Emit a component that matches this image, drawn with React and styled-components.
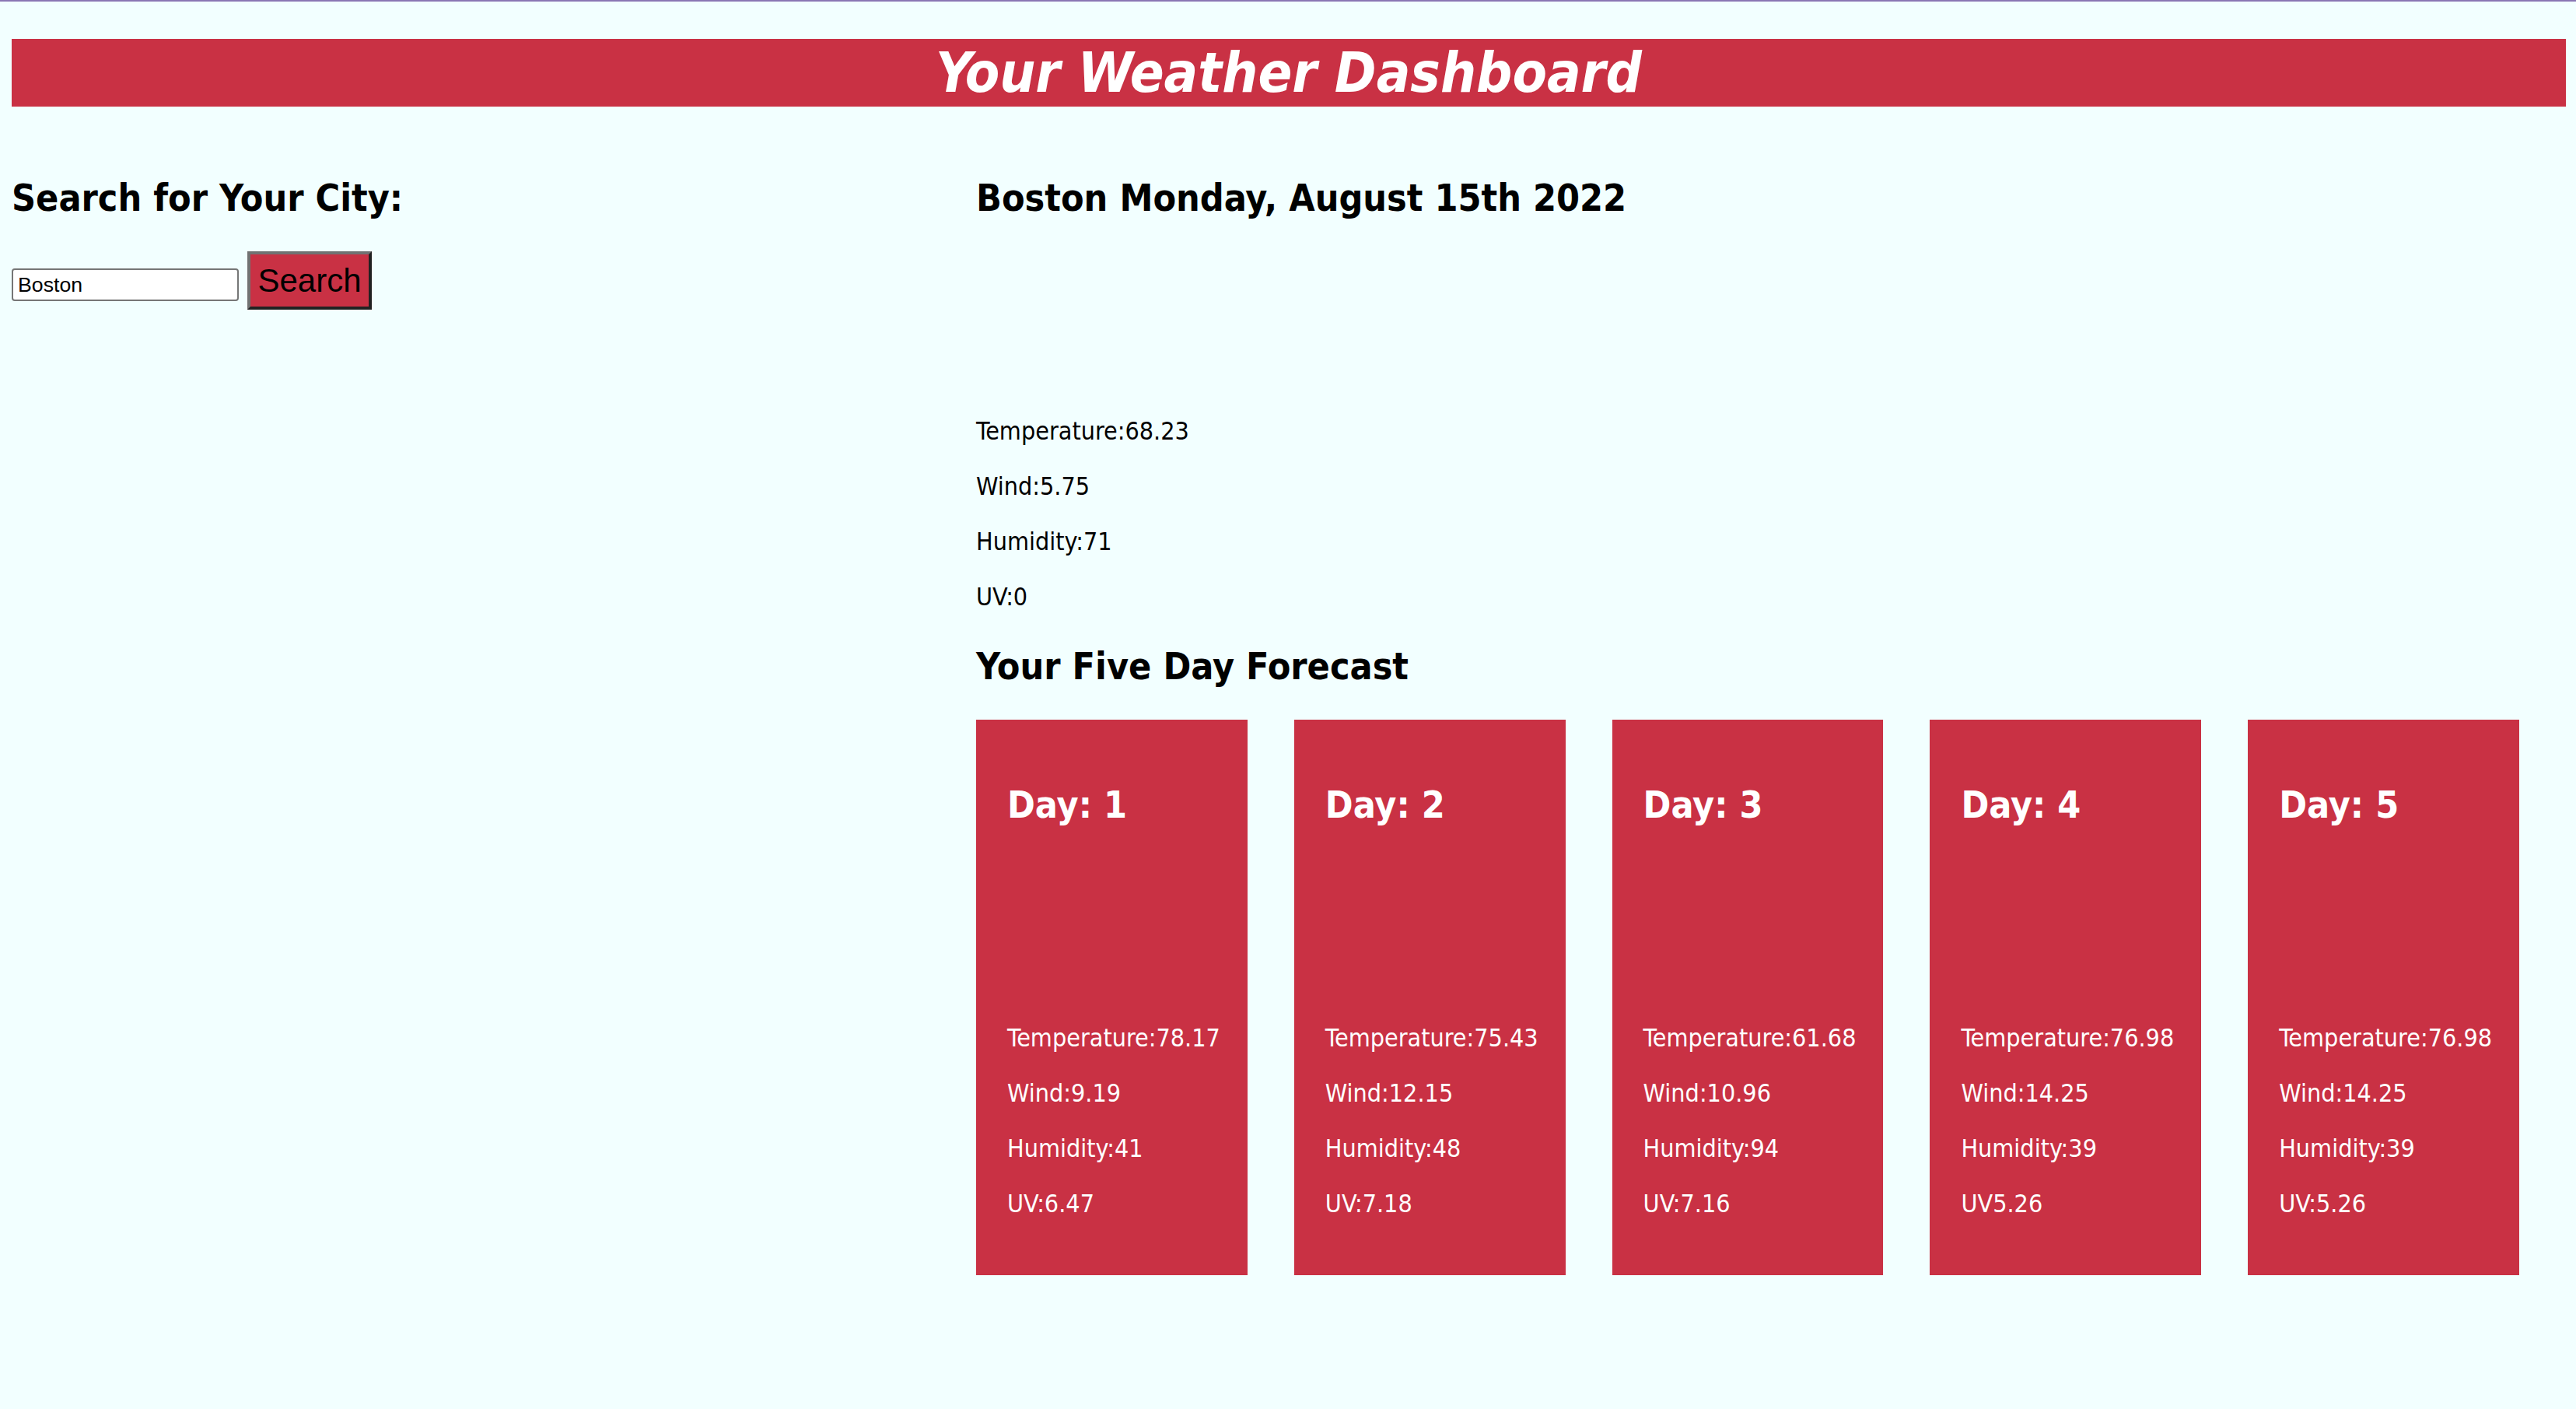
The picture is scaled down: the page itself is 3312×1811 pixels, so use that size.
import React from 'react'
import styled, { createGlobalStyle } from 'styled-components'

const GlobalStyle = createGlobalStyle`
  html, body {
    margin: 0;
    background: #f2ffff;
  }
  body {
    font-family: "DejaVu Sans Condensed", "DejaVu Sans", sans-serif;
    font-stretch: condensed;
    color: #000;
  }
`

const current = {
  city: 'Boston',
  date: 'Monday, August 15th 2022',
  stats: ['Temperature:68.23', 'Wind:5.75', 'Humidity:71', 'UV:0']
}

const forecast = [
  ['Temperature:78.17', 'Wind:9.19', 'Humidity:41', 'UV:6.47'],
  ['Temperature:75.43', 'Wind:12.15', 'Humidity:48', 'UV:7.18'],
  ['Temperature:61.68', 'Wind:10.96', 'Humidity:94', 'UV:7.16'],
  ['Temperature:76.98', 'Wind:14.25', 'Humidity:39', 'UV5.26'],
  ['Temperature:76.98', 'Wind:14.25', 'Humidity:39', 'UV:5.26']
]

export default function App () {
  return (
    <Page>
      <GlobalStyle />
      <Header>Your Weather Dashboard</Header>
      <Main>
        <Aside>
          <SectionTitle>Search for Your City:</SectionTitle>
          <SearchRow>
            <CityInput type='text' defaultValue='Boston' />
            <SearchButton type='button'>Search</SearchButton>
          </SearchRow>
        </Aside>
        <Content>
          <SectionTitle>{current.city} {current.date}</SectionTitle>
          <IconSpace />
          {current.stats.map(s => <Stat key={s}>{s}</Stat>)}
          <SectionTitle>Your Five Day Forecast</SectionTitle>
          <Cards>
            {forecast.map((day, i) => (
              <Card key={i}>
                <SectionTitle>Day: {i + 1}</SectionTitle>
                <IconSpace />
                {day.map(s => <Stat key={s}>{s}</Stat>)}
              </Card>
            ))}
          </Cards>
        </Content>
      </Main>
    </Page>
  )
}

const Page = styled.div`
border-top: 2px solid #8a76b4;
padding: 0 13px 0 15px;
min-height: 100vh;
box-sizing: border-box;
`
const Header = styled.h1`
margin: 48px 0;
background-color: #c93144;
color: white;
font-size: 72px;
font-style: italic;
font-weight: bold;
line-height: 87px;
text-align: center;
`
const Main = styled.main`
display: grid;
grid-template-columns: 1240px minmax(0, 1fr);
`
const Aside = styled.aside`
display: block;
`
const SectionTitle = styled.h2`
margin: 40px 0;
font-size: 48px;
line-height: 58px;
font-weight: bold;
`
const SearchRow = styled.div`
display: flex;
align-items: baseline;
gap: 11px;
`
const CityInput = styled.input`
width: 292px;
height: 42px;
box-sizing: border-box;
border: 2px solid #767676;
border-radius: 4px;
background: white;
padding: 0 6px;
font-family: "Liberation Sans", Arial, sans-serif;
font-size: 26.7px;
color: #000;
`
const SearchButton = styled.button`
width: 160px;
height: 75px;
box-sizing: border-box;
padding: 0;
background-color: #c93144;
border: 4px solid;
border-color: #727272 #222 #222 #727272;
font-family: "Liberation Sans", Arial, sans-serif;
font-size: 42px;
color: #000;
`
const Content = styled.section`
display: block;
`
const IconSpace = styled.div`
height: 180px;
`
const Stat = styled.p`
margin: 32px 0;
font-size: 32px;
line-height: 39px;
white-space: nowrap;
`
const Cards = styled.div`
display: flex;
gap: 60px;
padding-right: 60px;
`
const Card = styled.div`
flex: 1 1 0;
min-width: 0;
display: block;
padding: 40px;
background-color: #c93144;
color: white;
`
